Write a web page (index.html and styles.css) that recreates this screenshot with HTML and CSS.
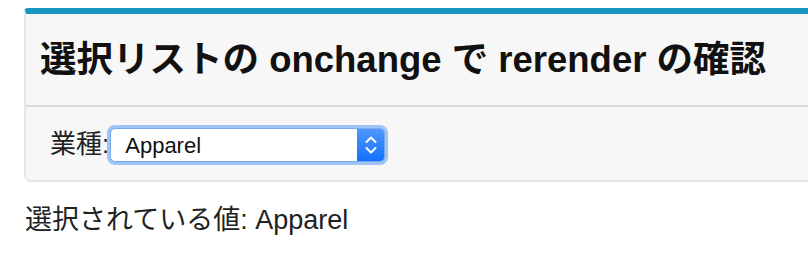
FILE: index.html
```html
<!DOCTYPE html>
<html lang="ja">
<head>
  <meta charset="UTF-8">
  <title>選択リストの onchange で rerender の確認</title>
  <link rel="stylesheet" href="styles.css">
</head>
<body>

  <div class="card">
    <div class="card-header">
      <h1>選択リストの onchange で rerender の確認</h1>
    </div>
    <div class="card-body">
      <label class="field-label" for="industry">業種:</label>
      <span class="select-wrap">
        <select id="industry" class="picklist">
          <option selected>Apparel</option>
          <option>Banking</option>
          <option>Biotechnology</option>
        </select>
        <span class="select-arrow">
          <svg width="14" height="22" viewBox="0 0 14 22">
            <path d="M2.5 8 L7 3.5 L11.5 8 M2.5 14 L7 18.5 L11.5 14" fill="none" stroke="#fff" stroke-width="2" stroke-linecap="round" stroke-linejoin="round"/>
          </svg>
        </span>
      </span>
    </div>
  </div>

  <p class="result">選択されている値: Apparel</p>

</body>
</html>
```

FILE: styles.css
```css
html {
  overflow: hidden;
}
body {
  margin: 8px 0 0 24px;
  font-family: "Liberation Sans", "Noto Sans CJK JP", sans-serif;
  background: #fff;
  color: #222;
}
.card {
  width: 820px;
  background: #f7f7f7;
  border: 2px solid #e6e6e6;
  border-top: 6px solid #1797c0;
  border-radius: 4px 4px 7px 7px;
}
.card-header {
  height: 91px;
  display: flex;
  align-items: center;
  padding: 0 14px;
  border-bottom: 2px solid #d9d9d9;
}
.card-header h1 {
  margin: 0;
  font-size: 36.5px;
  line-height: 1.2;
  font-weight: bold;
  color: #111;
}
.card-body {
  height: 70px;
  display: flex;
  align-items: center;
  padding: 3px 0 0 24px;
}
.field-label {
  font-size: 26px;
  line-height: 1.2;
  color: #222;
}
.select-wrap {
  position: relative;
  display: inline-block;
  margin-left: 1px;
}
.picklist {
  appearance: none;
  -webkit-appearance: none;
  display: block;
  width: 275px;
  height: 34px;
  padding: 0 36px 0 14px;
  font-family: "Liberation Sans", sans-serif;
  font-size: 22px;
  color: #111;
  background: #fff;
  border: 1px solid #7ba8e8;
  border-radius: 5px;
  box-shadow: 0 0 0 3px #9fc5f6;
  outline: none;
}
.select-arrow {
  position: absolute;
  top: 1px;
  right: 1px;
  width: 27px;
  height: 32px;
  display: flex;
  align-items: center;
  justify-content: center;
  background: linear-gradient(#4f98ff, #1470ff);
  border-radius: 0 4px 4px 0;
  pointer-events: none;
}
.result {
  margin: 22px 0 0 1px;
  font-size: 27px;
  line-height: 1.2;
  color: #222;
}
```
